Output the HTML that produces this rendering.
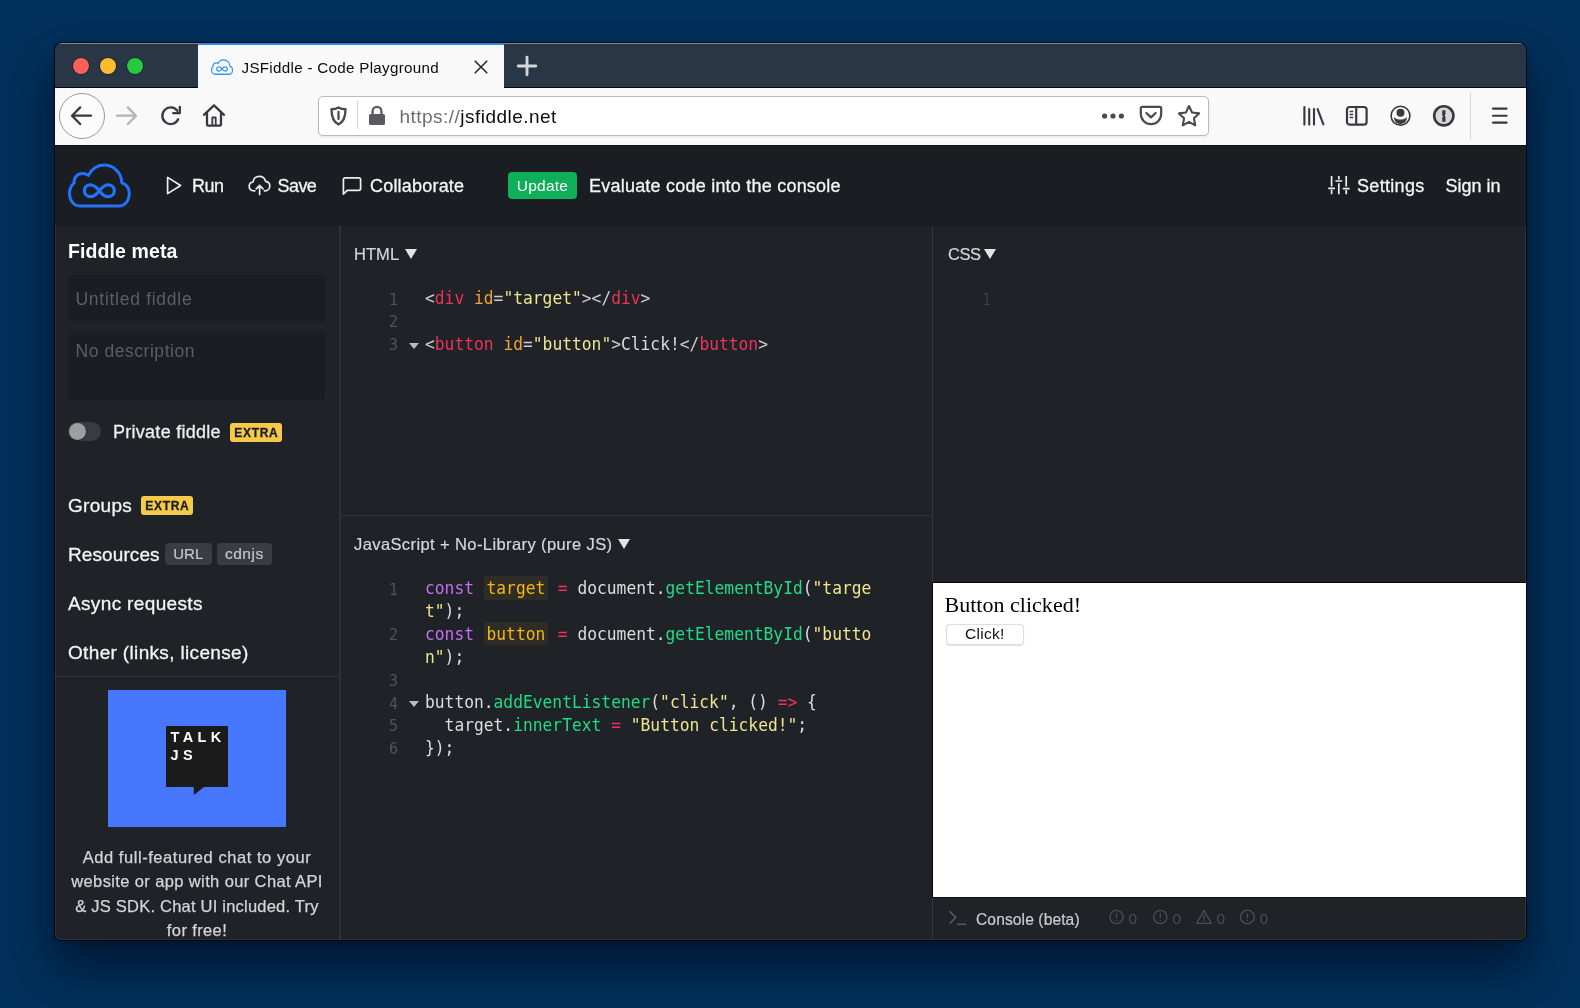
<!DOCTYPE html>
<html lang="en">
<head>
<meta charset="utf-8">
<title>JSFiddle - Code Playground</title>
<style>
*{box-sizing:border-box;margin:0;padding:0}
html,body{width:1580px;height:1008px;overflow:hidden}
body{background:#00315c;font-family:"Liberation Sans",sans-serif;position:relative}
.abs{position:absolute}
.win{position:absolute;left:55px;top:43px;width:1471px;height:897px;border-radius:7px 7px 6px 6px;overflow:hidden;background:#1f2227;box-shadow:0 0 0 1px rgba(0,0,8,.72),0 26px 48px 2px rgba(0,5,20,.58),0 3px 10px rgba(0,5,20,.16)}
.win:after{content:"";position:absolute;left:0;top:182px;right:0;bottom:0;border:1px solid rgba(255,255,255,.07);border-top:0;border-radius:0 0 6px 6px;pointer-events:none}
.pg{will-change:transform;position:absolute;left:-55px;top:-43px;width:1580px;height:1008px}
/* ---------- browser chrome ---------- */
.titlebar{left:54px;top:43px;width:1472px;height:45px;background:#283645;border-top:1.500px solid #80868f;border-bottom:1px solid #070a0e}
.tab{left:198px;top:43px;width:306px;height:45px;background:#f9f9fa;border-top:2.5px solid #2a8cf5}
.dot{width:16.500px;height:16.500px;border-radius:50%;top:57.700px;box-shadow:0 0 0 1px rgba(0,30,60,.55)}
.tabtitle{left:241.500px;top:58.600px;font-size:15.200px;letter-spacing:.29px;color:#0c0c0d;white-space:nowrap;line-height:18px}
.navbar{left:54px;top:88px;width:1472px;height:57px;background:#f9f9fa}
.urlbox{left:318px;top:96px;width:891px;height:40px;background:#fff;border:1px solid #b9b9bd;border-radius:5px;box-shadow:0 1px 2px rgba(0,0,0,.08)}
.url{left:399.500px;top:105px;font-size:19px;letter-spacing:.47px;color:#0c0c0d;white-space:nowrap;line-height:24px}
.url i{font-style:normal;color:#6d6d72}
/* ---------- jsfiddle ---------- */
.hdr{left:54px;top:145px;width:1472px;height:81px;background:#1a1d21;border-top:1px solid #0e1013}
.hb{-webkit-text-stroke:.3px #f3f4f5;color:#f3f4f5;font-size:18px;line-height:22px;white-space:nowrap}
.side{left:54px;top:226px;width:286px;height:714px;background:#1f2227}
.colA{left:340px;top:226px;width:593px;height:714px;background:#1f2227;border-right:1px solid #33363b}
.colB{left:933px;top:226px;width:593px;height:714px;background:#1f2227}
.mono{font-family:"DejaVu Sans Mono","Liberation Mono",monospace;font-size:18px;line-height:22.8px;white-space:pre;color:#dcdde0;transform:scaleX(.904);transform-origin:0 0}
.ln{font-family:"DejaVu Sans Mono","Liberation Mono",monospace;font-size:15px;line-height:22.8px;color:#505459;text-align:right;width:20px}
.k{color:#c66ff2}.v{color:#f5b80c;padding:0 3px}.o{color:#ee3359}.m{color:#1fdd86}.s{color:#f1e58f}.t{color:#ee3359}.a{color:#f0a23b}.b{color:#c9cbce}
.ptitle{-webkit-text-stroke:.2px #d5d7da;color:#d5d7da;font-size:16px;line-height:20px;white-space:nowrap}
.tri{width:0;height:0;border-left:6px solid transparent;border-right:6px solid transparent;border-top:10px solid #e2e3e5}
.fold{width:0;height:0;border-left:5px solid transparent;border-right:5px solid transparent;border-top:6px solid #b9bbbe}
.sl{-webkit-text-stroke:.3px #f3f4f5;color:#f3f4f5;font-size:19px;line-height:24px;white-space:nowrap}
.extra{background:#f7c948;color:#1c1e22;-webkit-text-stroke:.3px #1c1e22;font-size:12px;font-weight:700;letter-spacing:.65px;padding-left:.65px;border-radius:3px;line-height:20.500px;height:19px;text-align:center;overflow:hidden}
.pill{background:#393c42;color:#c5c7cb;-webkit-text-stroke:.2px #c5c7cb;font-size:14.5px;border-radius:4px;line-height:22px;height:22px;text-align:center}
.cz{top:908.800px;font-size:15.500px;line-height:20px;color:#494d53}
</style>
</head>
<body>
<div class="win"><div class="pg">

<!-- title bar -->
<div class="abs titlebar"></div>
<div class="abs dot" style="left:72.5px;background:#fe5f57"></div>
<div class="abs dot" style="left:99.5px;background:#febc2e"></div>
<div class="abs dot" style="left:126.5px;background:#28c840"></div>
<div class="abs tab"></div>
<div class="abs tabtitle">JSFiddle - Code Playground</div>

<!-- nav bar -->
<div class="abs navbar"></div>
<div class="abs urlbox"></div>
<div class="abs url"><i>https:<i>//</i></i>jsfiddle.net</div>


<!-- tab favicon / close / plus -->
<svg class="abs" style="left:210.500px;top:58.500px" width="22.500" height="16.500" viewBox="0 0 64 46" fill="none" stroke="#3596f5" stroke-width="3.600" stroke-linecap="round" stroke-linejoin="round"><path d="M11.600 42.900C5.500 42.900 1.500 37 1.500 30.500 1.500 25.500 3.500 22 6.200 20 5.500 14.500 9.500 10.500 14.600 10.500 17 10.500 19 11.300 20.300 12.500 23 6.500 29 2.100 36 2.100 45.500 2.100 53.500 9.500 53.900 20 58.500 21.500 61.300 25.500 61.300 30.500 61.300 37.500 57 42.900 51.500 42.900z"/><path d="M31.300 27.700C28 23.500 25.500 21.800 22.500 21.800 19 21.800 16.400 24.400 16.400 27.700S19 33.700 22.500 33.700C25.500 33.700 28 32 31.300 27.700S37 21.800 40.200 21.800C43.700 21.800 46.300 24.400 46.300 27.700S43.700 33.700 40.200 33.700C37 33.700 34.500 32 31.300 27.700z" stroke-width="3.600"/></svg>
<svg class="abs" style="left:473px;top:59px" width="16" height="16" viewBox="0 0 16 16" fill="none" stroke="#2a2a2e" stroke-width="1.600" stroke-linecap="round"><path d="M2.200 2.200l11.600 11.600M13.800 2.200L2.200 13.800"/></svg>
<svg class="abs" style="left:516px;top:55px" width="22" height="22" viewBox="0 0 22 22" fill="none" stroke="#d4d5d9" stroke-width="2.900" stroke-linecap="round"><path d="M11 2.200v17.600M2.200 11h17.600"/></svg>

<!-- back / forward / reload / home -->
<div class="abs" style="left:58.500px;top:92.500px;width:46px;height:46px;border-radius:50%;border:1px solid #98989c;background:#fcfcfd"></div>
<svg class="abs" style="left:69px;top:104px" width="24" height="24" viewBox="0 0 24 24" fill="none" stroke="#39393d" stroke-width="2.300" stroke-linecap="round" stroke-linejoin="round"><path d="M22 11.700H3.400M11.200 3.400L3 11.700l8.200 8.300"/></svg>
<svg class="abs" style="left:115px;top:104px" width="24" height="24" viewBox="0 0 24 24" fill="none" stroke="#b4b4b7" stroke-width="2.300" stroke-linecap="round" stroke-linejoin="round"><path d="M2 11.700h18.600M12.800 3.400L21 11.700 12.800 20"/></svg>
<svg class="abs" style="left:159px;top:104px" width="24" height="24" viewBox="0 0 24 24" fill="none" stroke="#39393d" stroke-width="2.300" stroke-linecap="round" stroke-linejoin="round"><path d="M19.200 15.200A8.300 8.300 0 1 1 18.300 6.800"/><path d="M20.800 2.800v6.400h-6.600"/></svg>
<svg class="abs" style="left:202px;top:103px" width="24" height="25" viewBox="0 0 24 25" fill="none" stroke="#39393d" stroke-width="2.300" stroke-linecap="round" stroke-linejoin="round"><path d="M2 11.800L12 2.400l10 9.400"/><path d="M5 10.500V21.500c0 .8.400 1.200 1.200 1.200h11.600c.8 0 1.200-.4 1.200-1.200V10.500"/><path d="M10.300 22v-7.500h3.400V22" stroke-width="1.800"/></svg>

<!-- url bar icons -->
<svg class="abs" style="left:329.500px;top:105.500px" width="17" height="20" viewBox="0 0 18 21" fill="none" stroke="#4a4a4f" stroke-width="2.500" stroke-linejoin="round"><path d="M9 1.400c-2.200 1.300-4.700 1.900-7.400 1.900 0 7.200 1.600 13.400 7.400 16.200 5.800-2.800 7.400-9 7.400-16.200-2.700 0-5.200-.6-7.400-1.900z"/><path d="M9 6.200v7.600" stroke-width="2.400" stroke-linecap="round"/></svg>
<div class="abs" style="left:357px;top:101px;width:1px;height:28px;background:#d4d4d8"></div>
<svg class="abs" style="left:368px;top:105px" width="18" height="21" viewBox="0 0 18 21"><path d="M4.600 9.500V6.200a4.400 4.400 0 0 1 8.800 0v3.300" fill="none" stroke="#5a5a5f" stroke-width="2.300"/><rect x="1" y="9" width="16" height="11" rx="1.600" fill="#5a5a5f"/></svg>
<svg class="abs" style="left:1101px;top:112px" width="24" height="8" viewBox="0 0 24 8" fill="#4a4a4f"><circle cx="3.600" cy="4" r="2.600"/><circle cx="12" cy="4" r="2.600"/><circle cx="20.400" cy="4" r="2.600"/></svg>
<svg class="abs" style="left:1139px;top:105px" width="24" height="21" viewBox="0 0 24 21" fill="none" stroke="#4a4a4f" stroke-width="2.200" stroke-linecap="round" stroke-linejoin="round"><path d="M3.200 1.800h17.600c.9 0 1.400.5 1.400 1.400v5.600c0 6-4.600 10.400-10.200 10.400S1.800 14.800 1.800 8.800V3.200c0-.9.500-1.400 1.400-1.400z"/><path d="M7.400 8l4.600 4.400L16.600 8"/></svg>
<svg class="abs" style="left:1177px;top:104px" width="24" height="24" viewBox="0 0 24 24" fill="none" stroke="#4a4a4f" stroke-width="2.100" stroke-linejoin="round"><path d="M12 2l3.050 6.500 7.050.9-5.200 4.900 1.350 7L12 17.800 5.750 21.300l1.350-7L1.900 9.400l7.050-.9z"/></svg>

<!-- right toolbar icons -->
<svg class="abs" style="left:1302px;top:105px" width="24" height="22" viewBox="0 0 24 22" fill="none" stroke="#39393d" stroke-width="2.100" stroke-linecap="round"><path d="M2.400 2v17.600M7.200 4v15.600M12 4v15.600M15.600 4.200l5.800 15.200"/></svg>
<svg class="abs" style="left:1345px;top:105px" width="24" height="22" viewBox="0 0 24 22" fill="none" stroke="#39393d" stroke-width="2.200" stroke-linejoin="round"><rect x="2" y="2" width="19.600" height="17.600" rx="2.600"/><path d="M11.200 2.400v17"/><path d="M4.600 6.400h3.600M4.600 9.400h3.600M4.600 12.400h3.600" stroke-width="1.500"/></svg>
<svg class="abs" style="left:1389px;top:104px" width="24" height="24" viewBox="0 0 24 24"><circle cx="11.500" cy="11.700" r="9.400" fill="none" stroke="#39393d" stroke-width="1.600"/><circle cx="11.500" cy="8.800" r="4" fill="#39393d"/><path d="M4.900 13.200C6.800 14.900 9 15.600 11.500 15.600S16.200 14.900 18.100 13.200C17.800 17.400 15 19.900 11.500 19.900S5.200 17.400 4.900 13.200z" fill="#39393d"/></svg>
<svg class="abs" style="left:1432px;top:104px" width="24" height="24" viewBox="0 0 24 24"><circle cx="11.800" cy="11.800" r="9.600" fill="#d9d9dc" stroke="#39393d" stroke-width="2.600"/><path d="M10.200 6.200h3.300v4.300l-1 1 1 1v5.200h-3.300v-4.300l1-1-1-1z" fill="#39393d"/></svg>
<div class="abs" style="left:1470px;top:93px;width:1px;height:46px;background:#d4d4d8"></div>
<svg class="abs" style="left:1490px;top:105px" width="20" height="22" viewBox="0 0 20 22" fill="none" stroke="#39393d" stroke-width="2.100" stroke-linecap="round"><path d="M3 3.600h13.600M3 10.700h13.600M3 17.600h13.600"/></svg>

<!-- jsfiddle header -->
<div class="abs hdr"></div>


<!-- header content -->
<svg class="abs" style="left:66px;top:161px" width="68" height="50" viewBox="-2 -2 68 50" fill="none" stroke="#2272fb" stroke-width="3" stroke-linecap="round" stroke-linejoin="round"><path d="M11.600 42.900C5.500 42.900 1.500 37 1.500 30.500 1.500 25.500 3.500 22 6.200 20 5.500 14.500 9.500 10.500 14.600 10.500 17 10.500 19 11.300 20.300 12.500 23 6.500 29 2.100 36 2.100 45.500 2.100 53.500 9.500 53.900 20 58.500 21.500 61.300 25.500 61.300 30.500 61.300 37.500 57 42.900 51.500 42.900z"/><path d="M31.300 27.700C28 23.500 25.500 21.800 22.500 21.800 19 21.800 16.400 24.400 16.400 27.700S19 33.700 22.500 33.700C25.500 33.700 28 32 31.300 27.700S37 21.800 40.200 21.800C43.700 21.800 46.300 24.400 46.300 27.700S43.700 33.700 40.200 33.700C37 33.700 34.500 32 31.300 27.700z" stroke-width="3.200"/></svg>
<svg class="abs" style="left:165px;top:175px" width="18" height="21" viewBox="0 0 18 21" fill="none" stroke="#eceef0" stroke-width="1.700" stroke-linejoin="round"><path d="M2.600 2.400v16.200L15.600 10.500z"/></svg>
<div class="abs hb" style="left:192px;top:175px;letter-spacing:-.5px">Run</div>
<svg class="abs" style="left:248px;top:174px" width="23" height="22" viewBox="0 0 23 22" fill="none" stroke="#eceef0" stroke-width="1.700" stroke-linecap="round" stroke-linejoin="round"><path d="M6.800 16.800H5.900C3.200 16.800 1.200 14.900 1.200 12.400c0-2.300 1.600-4.100 3.800-4.400C5.300 4.600 8 2.300 11.200 2.300c3.100 0 5.700 2.100 6.400 5 2.400.3 4.200 2.300 4.200 4.700 0 2.700-2.100 4.800-4.800 4.800h-.6"/><path d="M11.600 20.400V11.600M8.200 14.800l3.400-3.400 3.400 3.400"/></svg>
<div class="abs hb" style="left:277.500px;top:175px;letter-spacing:-.55px">Save</div>
<svg class="abs" style="left:341px;top:175px" width="22" height="22" viewBox="0 0 22 22" fill="none" stroke="#eceef0" stroke-width="1.700" stroke-linecap="round" stroke-linejoin="round"><path d="M2.400 19.200V4.600c0-1.100.7-1.800 1.800-1.800h13.600c1.100 0 1.800.7 1.800 1.800v9c0 1.100-.7 1.800-1.800 1.800H6.200z"/></svg>
<div class="abs hb" style="left:370px;top:175px;letter-spacing:.2px">Collaborate</div>
<div class="abs" style="left:508px;top:172px;width:69px;height:27px;background:#0fae58;border-radius:4px"></div>
<div class="abs" style="left:508px;top:176px;width:69px;text-align:center;font-size:15.500px;line-height:20px;color:#fff;letter-spacing:.25px;white-space:nowrap">Update</div>
<div class="abs hb" style="left:589px;top:175px;letter-spacing:.22px">Evaluate code into the console</div>
<svg class="abs" style="left:1327px;top:175px" width="24" height="20" viewBox="0 0 24 20" fill="none" stroke="#eceef0" stroke-width="1.700" stroke-linecap="butt"><path d="M4.600 1v10.400M4.600 14.800v4.400M11.800 1v3.600M11.800 8.200v11M19.200 1v10.600M19.200 15v4.200M1.200 13.400h6.800M8.400 6h6.800M15.800 13.600h6.800"/></svg>
<div class="abs hb" style="left:1357px;top:175px;letter-spacing:.32px">Settings</div>
<div class="abs hb" style="left:1445.500px;top:175px">Sign in</div>

<!-- columns -->
<div class="abs side"></div>
<div class="abs colA"></div>
<div class="abs colB"></div>


<!-- sidebar content -->
<div class="abs" style="left:339.200px;top:226px;width:1.800px;height:714px;background:#2f3237"></div>
<div class="abs" style="left:68px;top:239px;font-size:19.500px;font-weight:700;line-height:24px;color:#fff;letter-spacing:.1px;white-space:nowrap">Fiddle meta</div>
<div class="abs" style="left:68px;top:275px;width:257px;height:46px;background:#1a1d21;border-radius:4px"></div>
<div class="abs" style="left:75.500px;top:288px;font-size:17.500px;line-height:22px;color:#5b5f65;letter-spacing:.72px;white-space:nowrap">Untitled fiddle</div>
<div class="abs" style="left:68px;top:332.500px;width:257px;height:67.500px;background:#1a1d21;border-radius:4px"></div>
<div class="abs" style="left:75.500px;top:340px;font-size:17.500px;line-height:22px;color:#5b5f65;letter-spacing:.55px;white-space:nowrap">No description</div>
<div class="abs" style="left:68px;top:422px;width:33px;height:19px;border-radius:10px;background:#383b40"></div>
<div class="abs" style="left:68.500px;top:423px;width:17px;height:17px;border-radius:50%;background:#9c9ea1;box-shadow:0 1px 2px rgba(0,0,0,.4)"></div>
<div class="abs" style="left:113px;top:421px;font-size:18px;line-height:22px;color:#eceef0;-webkit-text-stroke:.3px #eceef0;letter-spacing:.27px;white-space:nowrap">Private fiddle</div>
<div class="abs extra" style="left:230px;top:423px;width:52px">EXTRA</div>
<div class="abs sl" style="left:68px;top:493.6px;letter-spacing:.3px">Groups</div>
<div class="abs extra" style="left:141px;top:496px;width:52px">EXTRA</div>
<div class="abs sl" style="left:68px;top:542.6px;letter-spacing:.1px">Resources</div>
<div class="abs pill" style="left:165px;top:543px;width:46.500px;font-size:15px">URL</div>
<div class="abs pill" style="left:216.800px;top:543px;width:55px;font-size:15.500px;letter-spacing:.5px">cdnjs</div>
<div class="abs sl" style="left:68px;top:591.6px;letter-spacing:.35px">Async requests</div>
<div class="abs sl" style="left:68px;top:640.6px;letter-spacing:.34px">Other (links, license)</div>
<div class="abs" style="left:54px;top:676px;width:286px;height:1px;background:#2e3136"></div>
<div class="abs" style="left:108px;top:690px;width:178px;height:137px;background:#4677fc"></div>
<div class="abs" style="left:166px;top:725.500px;width:61.500px;height:61.500px;background:#1b1b1b"></div>
<svg class="abs" style="left:193px;top:786px" width="13" height="10" viewBox="0 0 13 10"><path d="M.8 0h11.400L.8 9z" fill="#1b1b1b"/></svg>
<div class="abs" style="left:170.500px;top:729.400px;font-size:14.500px;font-weight:700;line-height:17.300px;color:#fff;letter-spacing:4.400px;white-space:pre">TALK
JS</div>
<div class="abs" style="left:54px;top:845px;width:286px;text-align:center;font-size:16.500px;line-height:24.400px;color:#d3d5d8;-webkit-text-stroke:.25px #d3d5d8;letter-spacing:.38px;white-space:nowrap"><span style="letter-spacing:.56px">Add full-featured chat to your</span><br>website or app with our Chat API<br><span style="letter-spacing:.22px">&amp; JS SDK. Chat UI included. Try</span><br>for free!</div>


<!-- HTML panel -->
<div class="abs ptitle" style="left:354px;top:243.500px;font-size:16.500px;letter-spacing:.05px">HTML</div>
<div class="abs tri" style="left:404.500px;top:249px"></div>
<div class="abs ln" style="left:378px;top:288.600px">1<br>2<br>3</div>
<div class="abs fold" style="left:409px;top:342.500px"></div>
<div class="abs mono" style="left:424.800px;top:287.100px"><span class="b">&lt;</span><span class="t">div</span> <span class="a">id</span><span class="b">=</span><span class="s">"target"</span><span class="b">&gt;&lt;/</span><span class="t">div</span><span class="b">&gt;</span>

<span class="b">&lt;</span><span class="t">button</span> <span class="a">id</span><span class="b">=</span><span class="s">"button"</span><span class="b">&gt;</span>Click!<span class="b">&lt;/</span><span class="t">button</span><span class="b">&gt;</span></div>
<div class="abs" style="left:341px;top:515px;width:592px;height:1px;background:#2e3136"></div>

<!-- JS panel -->
<div class="abs ptitle" style="left:354px;top:533.500px;font-size:16.500px;letter-spacing:.4px">JavaScript + No-Library (pure JS)</div>
<div class="abs tri" style="left:618px;top:539px"></div>
<div class="abs ln" style="left:378px;top:578.600px">1<br><br>2<br><br>3<br>4<br>5<br>6</div>
<div class="abs fold" style="left:409px;top:701px"></div>
<div class="abs" style="left:484px;top:576px;width:64px;height:23.500px;border-radius:3px;background:#2e2c24"></div>
<div class="abs" style="left:484px;top:621.500px;width:64px;height:23.500px;border-radius:3px;background:#2e2c24"></div>
<div class="abs mono" style="left:424.800px;top:577.300px"><span class="k">const</span> <span class="v">target</span> <span class="o">=</span> document.<span class="m">getElementById</span>(<span class="s">"targe</span>
<span class="s">t"</span>);
<span class="k">const</span> <span class="v">button</span> <span class="o">=</span> document.<span class="m">getElementById</span>(<span class="s">"butto</span>
<span class="s">n"</span>);

button.<span class="m">addEventListener</span>(<span class="s">"click"</span>, () <span class="o">=&gt;</span> {
  target.<span class="m">innerText</span> <span class="o">=</span> <span class="s">"Button clicked!"</span>;
});</div>

<!-- CSS panel -->
<div class="abs ptitle" style="left:948px;top:243.500px;font-size:16.500px;letter-spacing:-.4px">CSS</div>
<div class="abs tri" style="left:983.500px;top:248.500px"></div>
<div class="abs ln" style="left:971px;top:288.600px;color:#3d4146">1</div>

<!-- result -->
<div class="abs" style="left:932.200px;top:582px;width:594px;height:315.500px;background:#fff;border-top:1px solid #050608;border-left:1px solid #050608;border-bottom:1px solid #0d0f12"></div>
<div class="abs" style="left:944.500px;top:592.200px;font-family:'Liberation Serif',serif;font-size:22px;line-height:25px;color:#000;letter-spacing:.02px;white-space:nowrap">Button clicked!</div>
<div class="abs" style="left:946px;top:623.500px;width:77.500px;height:21.500px;background:#fff;border:1px solid #dedede;border-radius:4px;box-shadow:0 .5px 1px rgba(0,0,0,.12)"></div>
<div class="abs" style="left:946px;top:624.200px;width:77.500px;text-align:center;font-size:15.500px;line-height:19px;color:#111;letter-spacing:.3px;white-space:nowrap">Click!</div>

<!-- console bar -->
<svg class="abs" style="left:948px;top:909px" width="20" height="18" viewBox="0 0 20 18" fill="none" stroke="#565a60" stroke-width="1.600" stroke-linecap="round" stroke-linejoin="round"><path d="M2 2.600l5.800 5.800L2 14.200M9.600 15.200h8"/></svg>
<div class="abs" style="left:976px;top:909.700px;font-size:15.600px;line-height:20px;color:#c9cbce;-webkit-text-stroke:.2px #c9cbce;letter-spacing:.1px;white-space:nowrap">Console (beta)</div>
<svg class="abs" style="left:1108px;top:908px" width="170" height="20" viewBox="0 0 170 20" fill="none" stroke="#494d53" stroke-width="1.400" stroke-linecap="round" stroke-linejoin="round"><circle cx="8.500" cy="9" r="6.600"/><path d="M8.500 5.600v3.800M8.500 12.200v.3"/><circle cx="52.300" cy="9" r="6.600"/><path d="M52.300 5.600v3.800M52.300 12.200v.3"/><path d="M96 2.600l7.400 12.800H88.600z"/><path d="M96 7.400v3.600M96 13v.2"/><path d="M136.700 2.400h5.400l3.900 3.900v5.400l-3.900 3.900h-5.400l-3.900-3.900V6.300z"/><path d="M139.400 5.800v3.600M139.400 12.200v.3"/></svg>
<div class="abs cz" style="left:1128.500px">0</div><div class="abs cz" style="left:1172.500px">0</div><div class="abs cz" style="left:1216.500px">0</div><div class="abs cz" style="left:1259.500px">0</div>

</div></div>
</body>
</html>
